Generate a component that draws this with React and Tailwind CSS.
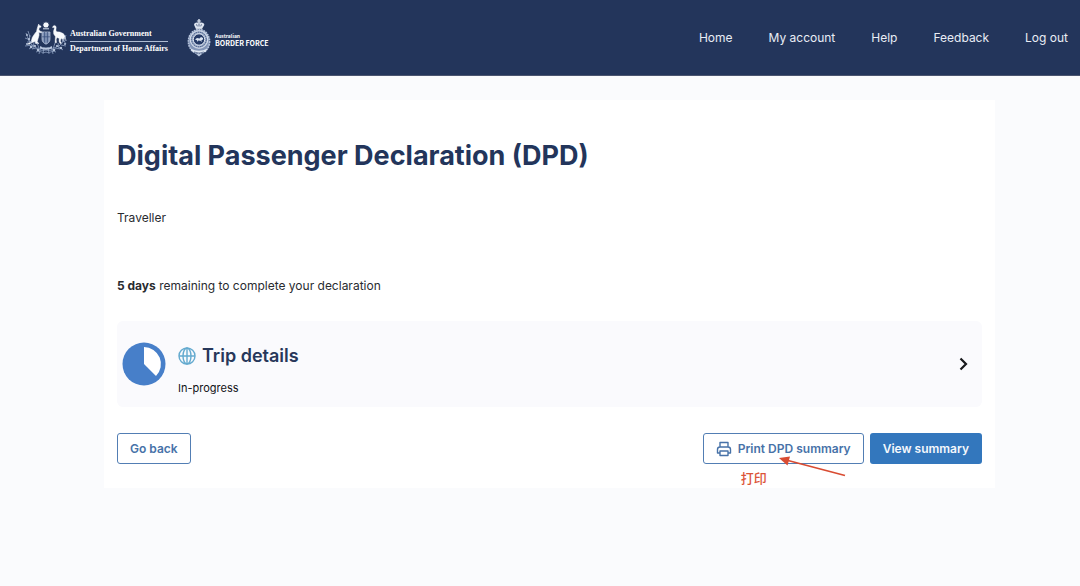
import React from "react";

const navItems = ["Home", "My account", "Help", "Feedback", "Log out"];

function CoatOfArms() {
  return (
    <svg viewBox="0 0 44 34" className="h-[34px] w-11 shrink-0" fill="none" aria-hidden="true">
      <path d="M22 .6l.8 1.3 1.5-.3-.2 1.5 1.1.9-1.2.9.2 1.5-1.5-.3-.7 1.2-.8-1.2-1.5.3.2-1.5-1.1-.9 1.1-.9-.2-1.5 1.5.3z" fill="#f4f7fb" />
      <path d="M19 7.8h6" stroke="#dbe3f0" strokeWidth="1" />
      <path d="M14.6 3.2l.9 1.2 1.3.7.2 1-1.8.5-.4 2.4 1.8 1.4 1.2.4-.2.9-1.8-.1-1-.6.2 3.2-.9 3.2-1 3.3 1.5 1.4-.4.9-2.6-.6-.5-2.2-2.8 1.2-3 1.8-1.6-.2 3.6-2.6 1-3.8 2.3-3.6 2-2.5.6-2.8z" fill="#f8fafd" stroke="#f8fafd" strokeWidth=".6" />
      <path d="M29 5.2l1.4-.8 1.3.6.5 1.6-.3 2.6.8 1.6 3.2.2 3.4 1.6 2 2.8.2 3.2-1.5-.8-1.4.2-1.6-.4-.6 2.6 1.4 2.2h-1.8l-1-2.2.2-2.8-2.2-1-.8 2.4.4 2.8-1.6.2.2-3.2.2-3-1.7-2.6-.2-2.8.8-2.6-.1-1.2-1.7.2z" fill="#f8fafd" stroke="#f8fafd" strokeWidth=".4" />
      <path d="M18 11h8v7.200c0 2.500-1.800 4-4 5-2.200-1-4-2.500-4-5z" fill="#8193b6" stroke="#bdc9dd" strokeWidth=".7" />
      <path d="M18.200 15.800h7.700M20.600 11v10.600M23.400 11v10.600" stroke="#344b79" strokeWidth=".7" />
      <g stroke="#8d9fc0" strokeWidth=".8">
        <path d="M2 12c2 5 3 10 7 13 4 3 9 3 13 2 5 1 9 0 13-2 4-3 5-7 7-11M1 17l5 2M3 21l5 0M6 14l-1 6M1 25l8-1M5 28l6-4M10 21l-1 7M13 22l2 5M31 22l-2 6M34 22l1 6M37 24l5 1M38 21l5-2M35 26l4 3M4 10l2 6M40 20l2 3" />
        <path d="M8 28c5-2 9 3 14 1 5 2 9-3 14-1M12 31c4-2 7 2 10 0 3 2 6-2 10 0M17 25l-2 8M27 25l2 8M20 26l-1 7M24 26l1 7" />
      </g>
      <g fill="#b9c6dc">
        <circle cx="3" cy="14" r=".9" /><circle cx="5" cy="18" r="1" /><circle cx="3" cy="23" r="1" />
        <circle cx="7" cy="26" r="1.200" /><circle cx="11" cy="25" r="1.100" /><circle cx="14" cy="29" r="1.200" />
        <circle cx="30" cy="29" r="1.200" /><circle cx="33" cy="25" r="1.100" /><circle cx="37" cy="27" r="1.200" />
        <circle cx="41" cy="23" r="1" /><circle cx="39" cy="19" r=".9" />
        <path d="M16 25.200q6 3 12 0v2q-6 3-12 0z" />
      </g>
    </svg>
  );
}

function BorderForceCrest() {
  return (
    <svg viewBox="0 0 24 38" className="h-[38px] w-6 shrink-0" fill="none" aria-hidden="true">
      <path d="M11.3 0h1.4v1.5h1.4v1h-1.4v1.2c2-.8 5 .1 4.600 2.200L15.500 9h-7L7.100 5.900c-.4-2.100 2.200-3 4.200-2.200V2.500H9.900v-1h1.400z" fill="#dce4f0" />
      <path d="M12 4.500v3M9.500 5.300l.8 2M14.500 5.300l-.8 2" stroke="#253963" strokeWidth=".7" />
      <path d="M8.700 9.700h6.600" stroke="#f1f5fa" strokeWidth="1" />
      <ellipse cx="12" cy="22.500" rx="10.600" ry="12" fill="#8496b8" stroke="#b5c3db" strokeWidth="1.600" strokeDasharray="1.800 .7" />
      <circle cx="12" cy="20.500" r="8.800" fill="#a5b4ce" stroke="#e7edf6" strokeWidth=".8" />
      <circle cx="12" cy="20.500" r="7.300" stroke="#3b5280" strokeWidth="1" strokeDasharray="1.500 .7" />
      <circle cx="12" cy="20.500" r="5.700" fill="#263b67" stroke="#e5ecf6" strokeWidth=".9" />
      <path d="M8 20.500l2-1.500 2.500.5 1.500-1.400 2 .9v1.500l-1.600.8.5 1.700-1.400-1.200-2.400-.2-.8 1.300-.3-1.700z" fill="#dce5f2" />
      <path d="M3.500 29.500q8.500 4.500 17 0l-1.500 3q-7 3.500-14 0z" fill="#dfe7f2" />
      <path d="M7 33q5 2.200 10 0" stroke="#43587f" strokeWidth=".7" />
      <path d="M9 35h6l-3 2.500z" fill="#bac7dc" />
    </svg>
  );
}

function ProgressPie() {
  return (
    <svg viewBox="0 0 44 44" className="size-11 shrink-0" role="img" aria-label="Trip details progress">
      <circle cx="22" cy="22" r="21.500" fill="#477fc9" />
      <path d="M22 22V5a17 17 0 0 1 12 29z" fill="#fff" />
    </svg>
  );
}

function GlobeIcon() {
  return (
    <svg viewBox="0 0 18 18" className="size-[18px] shrink-0" fill="none" stroke="#64aacf" strokeWidth="1.400" aria-hidden="true">
      <circle cx="9" cy="9" r="8" />
      <ellipse cx="9" cy="9" rx="4" ry="8" />
      <path d="M9 1v16M1 9h16" />
    </svg>
  );
}

function PrinterIcon() {
  return (
    <svg viewBox="0 0 16 16" className="size-4 shrink-0" fill="none" stroke="currentColor" strokeWidth="1.400" strokeLinejoin="round" aria-hidden="true">
      <path d="M4 6V1.500h8V6M4 12H1.500V8.500C1.500 7 2.300 6 4 6h8c1.700 0 2.500 1 2.500 2.500V12H12M4 10h8v4.500H4z" />
    </svg>
  );
}

export default function App() {
  return (
    <div className="min-h-screen bg-[#fafbfd] font-['Inter',sans-serif] text-[12px] leading-5 text-[#292b30]">
      <header className="flex h-[76px] items-center justify-between border-b border-[#4b5570] bg-[#23355b] pr-3 pl-6 text-[#e9edf5]">
        <div className="flex items-center gap-[19px]">
          <a href="#home" className="flex items-center gap-0.5 font-['Liberation_Serif',serif] text-[8px] leading-3 font-bold text-white">
            <CoatOfArms />
            <span className="flex flex-col whitespace-nowrap pt-2">
              <span className="border-b border-[#aebbd1] pb-px">Australian Government</span>
              <span className="pt-px">Department of Home Affairs</span>
            </span>
          </a>
          <a href="#border-force" className="flex items-center gap-1 font-['Noto_Sans_CJK_SC',sans-serif] font-bold text-white">
            <BorderForceCrest />
            <span className="flex flex-col whitespace-nowrap pt-1">
              <span className="text-[5px] leading-[7px]">Australian</span>
              <span className="text-[7px] leading-[9px]">BORDER FORCE</span>
            </span>
          </a>
        </div>
        <nav aria-label="Main" className="flex gap-9 whitespace-nowrap">
          {navItems.map((item) => (
            <a key={item} href="#main">{item}</a>
          ))}
        </nav>
      </header>

      <main id="main" className="pt-6 pr-[85px] pb-8 pl-[104px]">
        <section className="bg-white px-[13px] pt-[38px] pb-6">
          <h1 className="text-[27px] leading-9 font-[650] text-[#23355b]">Digital Passenger Declaration (DPD)</h1>
          <p className="mt-[34px]">Traveller</p>
          <p className="mt-12"><strong className="font-bold">5 days</strong> remaining to complete your declaration</p>

          <a href="#trip" className="mt-[25px] flex items-center rounded-md bg-[#fafafd] py-2.5 pr-3 pl-[5px]">
            <ProgressPie />
            <span className="ml-3 flex flex-1 flex-col gap-3 pt-[13px] pb-px">
              <span className="flex items-center gap-1.5">
                <GlobeIcon />
                <span className="text-[18px] leading-6 font-semibold text-[#27375a]">Trip details</span>
              </span>
              <span className="text-[11px] leading-4 text-[#111216]">In-progress</span>
            </span>
            <svg viewBox="0 0 12 16" className="h-4 w-3" fill="none" stroke="#18191c" strokeWidth="2.200" aria-hidden="true">
              <path d="M2.500 2.500L8 8 2.500 13.500" />
            </svg>
          </a>

          <div className="mt-[26px] flex items-center justify-between font-semibold whitespace-nowrap">
            <button type="button" className="h-[31px] rounded-[3px] border border-[#527eb4] px-3 text-[#4772a8]">Go back</button>
            <div className="flex gap-1.5">
              <div className="relative">
                <button type="button" className="flex h-[31px] items-center gap-1.5 rounded-[3px] border border-[#527eb4] px-3 text-[#4772a8]">
                  <PrinterIcon />
                  Print DPD summary
                </button>
                <svg viewBox="0 0 70 24" className="pointer-events-none absolute top-[23px] left-[75px] h-6 w-[70px]" aria-hidden="true">
                  <path d="M10 4.500L67 19.500" stroke="#d94c32" strokeWidth="1.800" />
                  <path d="M1 2l11-1.500-2.500 9z" fill="#d94c32" />
                </svg>
                <span lang="zh" className="absolute top-[35px] left-[38px] font-['Noto_Sans_CJK_SC',sans-serif] text-[13px] font-medium text-[#dc5539]">打印</span>
              </div>
              <button type="button" className="h-[31px] rounded-[3px] bg-[#3377bd] px-[13px] text-[#f4f8fc]">View summary</button>
            </div>
          </div>
        </section>
      </main>
    </div>
  );
}
